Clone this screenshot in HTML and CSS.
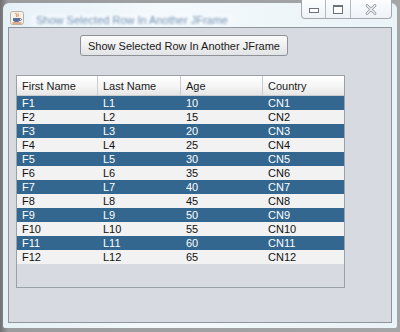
FILE: index.html
```html
<!DOCTYPE html>
<html lang="en">
<head>
    <meta charset="UTF-8">
    <title>Show Selected Row In Another JFrame</title>
    <link rel="stylesheet" href="styles.css">
</head>
<body>
    <div class="window">
        <!-- Barra de titulo -->
        <div class="titlebar">
            <svg class="app-icon" width="14" height="14" viewBox="0 0 14 14">
                <rect x="0.5" y="0.5" width="13" height="13" rx="2" fill="#f4f1ea" stroke="#b9b2a4"/>
                <path d="M6 2 C5 3.5 8 4 6.5 6 M8 2.5 C7.2 3.6 9.5 4 8.2 5.6" stroke="#e07a36" stroke-width="1" fill="none"/>
                <path d="M3 7 H10 V9 C10 10.5 8.5 11 6.5 11 C4.5 11 3 10.5 3 9 Z" fill="#5a6f9a"/>
                <path d="M10 7.5 C12 7.5 12 9.5 10 9.5" stroke="#5a6f9a" stroke-width="1" fill="none"/>
                <rect x="2.5" y="11.5" width="9" height="1" fill="#d0692a"/>
            </svg>
            <span class="title-text">Show Selected Row In Another JFrame</span>
            <div class="caption-buttons">
                <div class="cap-btn min"><span class="min-icon"></span></div>
                <div class="cap-btn max"><span class="max-icon"></span></div>
                <div class="cap-btn close">
                    <svg width="12" height="11" viewBox="0 0 12 11">
                        <path d="M2 1.5 L10 9.5 M10 1.5 L2 9.5" stroke="#8a8f96" stroke-width="2.6" stroke-linecap="round"/>
                        <path d="M2 1.5 L10 9.5 M10 1.5 L2 9.5" stroke="#f5f6f8" stroke-width="1.2" stroke-linecap="round"/>
                    </svg>
                </div>
            </div>
        </div>

        <!-- Contenido -->
        <div class="content">
            <div class="button-row">
                <button class="btn">Show Selected Row In Another JFrame</button>
            </div>

            <div class="table-pane">
                <div class="grid header">
                    <div class="th">First Name</div>
                    <div class="th">Last Name</div>
                    <div class="th">Age</div>
                    <div class="th">Country</div>
                </div>
                <div id="rows"></div>
            </div>
        </div>
    </div>

    <script>
        // Datos de la tabla
        const rowsEl = document.getElementById('rows');
        for (let i = 1; i <= 12; i++) {
            const row = document.createElement('div');
            row.className = 'grid row' + (i % 2 === 1 ? ' selected' : '');
            const cells = ['F' + i, 'L' + i, String(5 + i * 5), 'CN' + i];
            cells.forEach((text) => {
                const cell = document.createElement('div');
                cell.className = 'td';
                cell.textContent = text;
                row.appendChild(cell);
            });
            rowsEl.appendChild(row);
        }
    </script>
</body>
</html>
```

FILE: styles.css
```css
:root {
    --panel-bg: #d7dae0;
    --selection: #33678f;
    --row-bg: #f2f2f2;
    --border: #9aa0a8;
}

body {
    margin: 0;
    width: 400px;
    height: 332px;
    background: linear-gradient(90deg, #6f7173 0%, #9a9c9e 2%, #a3a5a7 100%);
    font-family: "Liberation Sans", Arial, sans-serif;
    font-size: 11px;
    overflow: hidden;
}

/* Ventana principal */
.window {
    margin: 3px 0 0 3px;
    width: 394px;
    height: 325px;
    box-sizing: border-box;
    padding: 0 5px 5px 5px;
    background: linear-gradient(90deg, #e6f1f7 0%, #f4f9fc 40%, #eaf3f8 100%);
    border-radius: 6px 6px 2px 2px;
    display: flex;
    flex-direction: column;
}

.titlebar {
    height: 24px;
    display: flex;
    align-items: flex-start;
    position: relative;
}

.app-icon {
    margin: 8px 0 0 2px;
}

.title-text {
    margin: 11px 0 0 8px;
    padding: 0 4px;
    color: #4d6f98;
    font-size: 11px;
    filter: blur(1.3px);
    opacity: 0.75;
    background: #f6fbff;
}

.caption-buttons {
    position: absolute;
    right: 0;
    top: -3px;
    display: flex;
    height: 18px;
    border: 1px solid #a4a8ae;
    border-top: none;
    border-radius: 0 0 4px 4px;
    background: linear-gradient(#fbfdfe, #eef3f7);
}

.cap-btn {
    display: flex;
    align-items: center;
    justify-content: center;
    border-left: 1px solid #b4b8bd;
}

.cap-btn.min {
    width: 23px;
    border-left: none;
}

.cap-btn.max {
    width: 24px;
}

.cap-btn.close {
    width: 40px;
}

.min-icon {
    width: 8px;
    height: 3px;
    border: 1px solid #6c7178;
    background: #fff;
    margin-top: 3px;
}

.max-icon {
    width: 8px;
    height: 6px;
    border: 1px solid #6c7178;
    border-top-width: 2px;
    background: #fff;
}

/* Panel de contenido */
.content {
    flex: 1;
    background: var(--panel-bg);
    border: 1px solid #8e959d;
    padding: 7px 0 0 7px;
}

.button-row {
    padding-left: 64px;
}

.btn {
    width: 208px;
    height: 21px;
    padding: 0;
    font-family: "Liberation Sans", Arial, sans-serif;
    font-size: 11px;
    color: #1a1a1a;
    background: linear-gradient(#fbfbfb 0%, #f0f0f0 50%, #e2e3e5 100%);
    border: 1px solid #8e9298;
    border-radius: 3px;
}

/* Tabla */
.table-pane {
    margin-top: 19px;
    width: 329px;
    height: 213px;
    box-sizing: border-box;
    border: 1px solid var(--border);
}

.grid {
    display: grid;
    grid-template-columns: 81px 83px 82px 1fr;
}

.header {
    height: 19px;
    background: linear-gradient(#ffffff 0%, #f5f5f5 55%, #e6e6e6 100%);
    border-bottom: 1px solid #c8cacd;
}

.th {
    padding: 4px 0 0 5px;
    border-right: 1px solid #c9cbce;
    color: #1a1a1a;
}

.th:last-child {
    border-right: none;
}

.row {
    height: 14px;
    background: var(--row-bg);
    color: #111;
}

.row.selected {
    background: var(--selection);
    color: #fff;
}

.td {
    padding: 1px 0 0 5px;
    line-height: 13px;
}
```
